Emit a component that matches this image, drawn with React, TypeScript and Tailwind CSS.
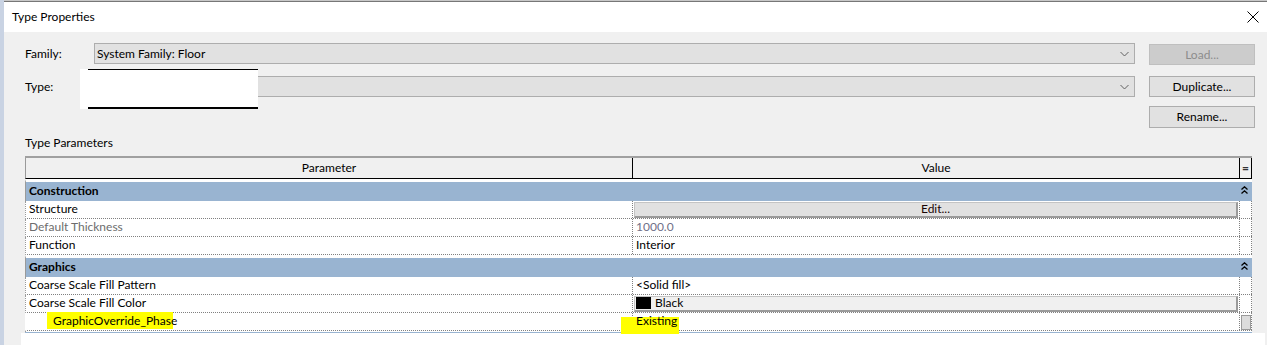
import React from "react";

function Chevron() {
  return (
    <svg width="9" height="6" viewBox="0 0 9 6" className="shrink-0">
      <path d="M0.5 1 L4.5 5 L8.5 1" fill="none" stroke="#606060" strokeWidth="1" />
    </svg>
  );
}

function Collapse() {
  return (
    <svg width="7" height="8" viewBox="0 0 7 8">
      <path d="M0.5 3.5 L3.5 0.8 L6.5 3.5 M0.5 7.5 L3.5 4.8 L6.5 7.5" fill="none" stroke="#000" strokeWidth="1.3" />
    </svg>
  );
}

function Combo({ text }: { text: string }) {
  return (
    <div className="flex h-[21px] flex-1 items-center justify-between border border-[#adadad] bg-[#e1e1e1] pl-[2px] pr-[5px]">
      <span>{text}</span>
      <Chevron />
    </div>
  );
}

function Btn({ label, disabled }: { label: string; disabled?: boolean }) {
  return (
    <div
      className={
        disabled
          ? "flex h-[21px] w-[106px] items-center justify-center border border-[#bfbfbf] bg-[#cccccc] text-[#8d8d8d]"
          : "flex h-[21px] w-[106px] items-center justify-center border border-[#adadad] bg-[#e1e1e1]"
      }
    >
      {label}
    </div>
  );
}

function GroupRow({ title }: { title: string }) {
  return (
    <div className="flex h-[22px] border-l border-t-[3px] border-l-[#9a9a9a] border-t-white bg-[#99b4d1]">
      <div className="flex w-[1214px] items-center pb-[2px] pl-[3px] font-bold">{title}</div>
      <div className="flex w-[12px] items-center pl-[1px] pb-[3px]">
        <Collapse />
      </div>
    </div>
  );
}

function Row({
  name,
  value,
  dim,
  last,
}: {
  name: React.ReactNode;
  value: React.ReactNode;
  dim?: boolean;
  last?: boolean;
}) {
  return (
    <div
      className={`flex h-[18px] border-b border-l border-b-[#808080] border-dotted ${
        last ? "border-l-white" : "border-l-[#9a9a9a] border-l-solid"
      } bg-white`}
    >
      <div
        className={`flex w-[607px] items-center whitespace-nowrap border-r border-dotted border-r-[#808080] pb-[2px] pl-[3px] ${
          dim ? "text-[#6d6d6d]" : ""
        }`}
      >
        {name}
      </div>
      <div className={`relative flex w-[607px] items-center border-r border-dotted border-r-[#808080] ${dim ? "text-[#707088]" : ""}`}>
        {value}
      </div>
      <div className="relative w-[12px] border-r border-dotted border-r-[#808080]">
        {last && <div className="absolute left-[1px] top-[2px] h-[15px] w-[10px] border border-[#9a9a9a] bg-[#dcdcdc]" />}
      </div>
    </div>
  );
}

export default function App() {
  return (
    <div className="flex h-[345px] w-[1267px] overflow-hidden bg-[#f0f0f0] font-[Lato,'Liberation_Sans',sans-serif] text-[12px] leading-none text-black">
      <div className="w-[4px] shrink-0 bg-[#c9d3e3]" />
      <div className="flex flex-1 flex-col">
        <div className="h-[2px] border-t border-[#c8c8c8] bg-[#777]" />
        <div className="flex h-[30px] items-center justify-between bg-white pl-[8px] pr-[8px]">
          <span>Type Properties</span>
          <svg width="12" height="12" viewBox="0 0 12 12">
            <path d="M0.5 0.5 L11.5 11.5 M11.5 0.5 L0.5 11.5" stroke="#000" strokeWidth="1" />
          </svg>
        </div>

        <div className="flex flex-1 flex-col pl-[21px] pt-[11px]">
          <div className="flex h-[21px] items-center pr-[12px]">
            <span className="w-[69px]">Family:</span>
            <Combo text="System Family: Floor" />
            <div className="ml-[14px] mt-[2px]">
              <Btn label="Load..." disabled />
            </div>
          </div>

          <div className="relative mt-[12px] flex h-[21px] items-center pr-[12px]">
            <span className="w-[69px]">Type:</span>
            <Combo text="" />
            <div className="ml-[14px]">
              <Btn label="Duplicate..." />
            </div>
            <div className="absolute left-[55px] top-[-7px] h-[40px] w-[178px] bg-white">
              <div className="ml-[8px] h-[1px] bg-black" />
              <div className="absolute bottom-0 left-[8px] right-0 h-[2px] bg-black" />
            </div>
          </div>

          <div className="mt-[9px] flex justify-end pr-[12px]">
            <div className="flex h-[22px] w-[106px] items-center justify-center border border-[#adadad] bg-[#e1e1e1]">
              Rename...
            </div>
          </div>

          <div className="mt-[7px] flex h-[16px] items-center">Type Parameters</div>

          <div className="mt-[5px] w-[1227px] border-t-2 border-[#a0a0a0]">
            <div className="flex h-[21px] border-b border-l border-b-black border-l-[#9a9a9a] bg-[#f0f0f0]">
              <div className="flex w-[607px] items-center justify-center border-r border-black">Parameter</div>
              <div className="flex w-[607px] items-center justify-center border-r border-black">Value</div>
              <div className="flex w-[12px] items-center justify-center border-r border-black font-bold text-[#333]">=</div>
            </div>

            <GroupRow title="Construction" />
            <Row
              name="Structure"
              value={
                <div className="mx-[1px] flex h-[16px] flex-1 items-center justify-center border-l border-t border-[#c4c4c4] border-b-2 border-r-2 border-b-[#9a9a9a] border-r-[#9a9a9a] bg-[#e1e1e1] pb-[1px] text-[#1a0505]">
                  Edit...
                </div>
              }
            />
            <Row name="Default Thickness" dim value={<span className="pb-[2px] pl-[3px]">1000.0</span>} />
            <Row name="Function" value={<span className="pb-[2px] pl-[3px]">Interior</span>} />

            <GroupRow title="Graphics" />
            <Row name="Coarse Scale Fill Pattern" value={<span className="pb-[2px] pl-[3px]">&lt;Solid fill&gt;</span>} />
            <Row
              name="Coarse Scale Fill Color"
              value={
                <div className="mx-[1px] flex h-[16px] flex-1 items-center gap-[4px] border-l border-t border-[#c4c4c4] border-b-2 border-r-2 border-b-[#9a9a9a] border-r-[#9a9a9a] bg-[#f0f0f0] pl-[1px]">
                  <span className="h-[12px] w-[15px] bg-black" />
                  <span className="pb-[1px]">Black</span>
                </div>
              }
            />
            <Row
              last
              name={
                <span className="ml-[18px] flex h-[17px] w-[126px] items-center bg-[#ffff00] pl-[6px]">
                  GraphicOverride_Phase
                </span>
              }
              value={
                <>
                  <span className="absolute left-[-12px] top-[4px] h-[17px] w-[58px] bg-[#ffff00]" />
                  <span className="relative pb-[2px] pl-[3px]">Existing</span>
                </>
              }
            />
            <div className="h-[1px] border-l border-[#9a9a9a] bg-white" />
            <div className="h-[1px] bg-[#99b4d1]" />
          </div>
          <div className="ml-[-4px] w-[1244px] flex-1 bg-white" />
        </div>
      </div>
    </div>
  );
}
